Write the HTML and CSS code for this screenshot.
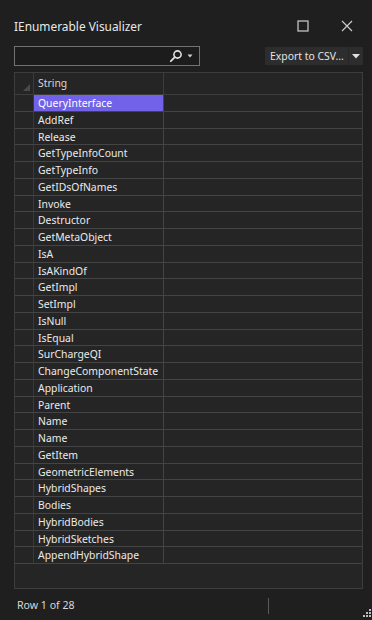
FILE: index.html
```html
<!DOCTYPE html>
<html>
<head>
<meta charset="utf-8">
<link rel="stylesheet" href="styles.css">
</head>
<body>
<div class="window">
  <div class="titlebar">
    <span class="title">IEnumerable Visualizer</span>
    <div class="controls">
      <span class="ctl max"><svg width="12" height="12" viewBox="0 0 12 12"><rect x="1" y="1" width="10" height="10" fill="none" stroke="#d0d0d0" stroke-width="1.2"/></svg></span>
      <span class="ctl close"><svg width="12" height="12" viewBox="0 0 12 12"><path d="M1 1L11 11M11 1L1 11" stroke="#d0d0d0" stroke-width="1.1"/></svg></span>
    </div>
  </div>
  <div class="toolbar">
    <div class="search">
      <svg class="mag" width="14" height="14" viewBox="0 0 14 14"><circle cx="8.5" cy="5.5" r="3.6" fill="none" stroke="#e0e0e0" stroke-width="1.6"/><path d="M5.8 8.2L1.8 12.2" stroke="#e0e0e0" stroke-width="1.8" stroke-linecap="round"/></svg>
      <svg class="caret" width="6" height="4" viewBox="0 0 6 4"><path d="M0.5 0.5H5.5L3 3.5Z" fill="#cfcfcf"/></svg>
    </div>
    <div class="export">
      <span class="export-label">Export to CSV...</span>
      <span class="export-drop"><svg width="8" height="5" viewBox="0 0 8 5"><path d="M0 0H8L4 4.5Z" fill="#e0e0e0"/></svg></span>
    </div>
  </div>
  <div class="grid">
    <div class="row head">
      <div class="rh"><span class="corner"></span></div>
      <div class="c1">String</div>
      <div class="c2"></div>
    </div>
    <div class="row sel"><div class="rh"></div><div class="c1">QueryInterface</div><div class="c2"></div></div>
    <div class="row"><div class="rh"></div><div class="c1">AddRef</div><div class="c2"></div></div>
    <div class="row"><div class="rh"></div><div class="c1">Release</div><div class="c2"></div></div>
    <div class="row"><div class="rh"></div><div class="c1">GetTypeInfoCount</div><div class="c2"></div></div>
    <div class="row"><div class="rh"></div><div class="c1">GetTypeInfo</div><div class="c2"></div></div>
    <div class="row"><div class="rh"></div><div class="c1">GetIDsOfNames</div><div class="c2"></div></div>
    <div class="row"><div class="rh"></div><div class="c1">Invoke</div><div class="c2"></div></div>
    <div class="row"><div class="rh"></div><div class="c1">Destructor</div><div class="c2"></div></div>
    <div class="row"><div class="rh"></div><div class="c1">GetMetaObject</div><div class="c2"></div></div>
    <div class="row"><div class="rh"></div><div class="c1">IsA</div><div class="c2"></div></div>
    <div class="row"><div class="rh"></div><div class="c1">IsAKindOf</div><div class="c2"></div></div>
    <div class="row"><div class="rh"></div><div class="c1">GetImpl</div><div class="c2"></div></div>
    <div class="row"><div class="rh"></div><div class="c1">SetImpl</div><div class="c2"></div></div>
    <div class="row"><div class="rh"></div><div class="c1">IsNull</div><div class="c2"></div></div>
    <div class="row"><div class="rh"></div><div class="c1">IsEqual</div><div class="c2"></div></div>
    <div class="row"><div class="rh"></div><div class="c1">SurChargeQI</div><div class="c2"></div></div>
    <div class="row"><div class="rh"></div><div class="c1">ChangeComponentState</div><div class="c2"></div></div>
    <div class="row"><div class="rh"></div><div class="c1">Application</div><div class="c2"></div></div>
    <div class="row"><div class="rh"></div><div class="c1">Parent</div><div class="c2"></div></div>
    <div class="row"><div class="rh"></div><div class="c1">Name</div><div class="c2"></div></div>
    <div class="row"><div class="rh"></div><div class="c1">Name</div><div class="c2"></div></div>
    <div class="row"><div class="rh"></div><div class="c1">GetItem</div><div class="c2"></div></div>
    <div class="row"><div class="rh"></div><div class="c1">GeometricElements</div><div class="c2"></div></div>
    <div class="row"><div class="rh"></div><div class="c1">HybridShapes</div><div class="c2"></div></div>
    <div class="row"><div class="rh"></div><div class="c1">Bodies</div><div class="c2"></div></div>
    <div class="row"><div class="rh"></div><div class="c1">HybridBodies</div><div class="c2"></div></div>
    <div class="row"><div class="rh"></div><div class="c1">HybridSketches</div><div class="c2"></div></div>
    <div class="row"><div class="rh"></div><div class="c1">AppendHybridShape</div><div class="c2"></div></div>
  </div>
  <div class="status">
    <span class="status-text">Row 1 of 28</span>
    <span class="status-sep"></span>
    <svg class="grip" width="10" height="10" viewBox="0 0 10 10" fill="#bdbdbd"><rect x="8" y="0" width="2" height="2"/><rect x="5" y="3" width="2" height="2"/><rect x="8" y="3" width="2" height="2"/><rect x="2" y="6" width="2" height="2"/><rect x="5" y="6" width="2" height="2"/><rect x="8" y="6" width="2" height="2"/></svg>
  </div>
</div>
</body>
</html>
```
FILE: styles.css
```css
html, body {
  margin: 0;
  padding: 0;
  background: #1f1f1f;
}
.window {
  width: 372px;
  height: 620px;
  display: flex;
  flex-direction: column;
  font-family: "Noto Sans", "Open Sans", sans-serif;
  color: #e6e6e6;
  position: relative;
  box-sizing: border-box;
}
.titlebar {
  height: 46px;
  display: flex;
  align-items: flex-start;
  justify-content: space-between;
  padding: 17px 0 0 14px;
  box-sizing: border-box;
}
.title {
  font-size: 11.9px;
  color: #e8e8e8;
  line-height: 18px;
}
.controls {
  display: flex;
  padding-top: 3px;
}
.ctl {
  width: 44px;
  height: 12px;
  display: flex;
  justify-content: center;
}
.ctl.close { margin-right: 3px; }
.toolbar {
  height: 26px;
  display: flex;
  justify-content: space-between;
  padding: 0 9px 0 14px;
}
.search {
  width: 186px;
  height: 20px;
  box-sizing: border-box;
  border: 1px solid #727272;
  background: #1c1c1c;
  display: flex;
  align-items: center;
  justify-content: flex-end;
  padding-right: 6px;
  gap: 4px;
}
.export {
  width: 98px;
  height: 18px;
  margin-top: 1px;
  background: #2d2d2d;
  display: flex;
  align-items: center;
  font-size: 10.4px;
  color: #e4e4e4;
}
.export-label {
  flex: 1;
  padding-left: 5px;
  white-space: nowrap;
  border-right: 1px solid #262626;
  line-height: 18px;
}
.export-drop {
  width: 14px;
  display: flex;
  justify-content: center;
}
.grid {
  margin: 0 9px 0 14px;
  height: 517px;
  box-sizing: border-box;
  border: 1px solid #3d3d3d;
  background: #252525;
  font-size: 10.4px;
}
.row {
  display: flex;
  height: 16.75px;
  box-sizing: border-box;
  border-bottom: 1px solid #444;
}
.row.head {
  height: 22px;
  border-bottom: 1px solid #3d3d3d;
}
.rh {
  width: 18px;
  border-right: 1px solid #3a3a3a;
  position: relative;
}
.corner {
  position: absolute;
  right: 3px;
  bottom: 3px;
  width: 0;
  height: 0;
  border-left: 7px solid transparent;
  border-bottom: 7px solid #4a4a4a;
}
.c1 {
  width: 130px;
  border-right: 1px solid #444;
  padding: 1px 0 0 4px;
  line-height: 14.75px;
  color: #ebebeb;
  white-space: nowrap;
  overflow: hidden;
  box-sizing: border-box;
}
.head .c1 {
  line-height: 21px;
  padding-top: 0;
  color: #d8d8d8;
  border-right-color: #3d3d3d;
}
.c2 { flex: 1; }
.sel .c1 {
  background: #7262e9;
  color: #ffffff;
}
.status {
  flex: 1;
  display: flex;
  align-items: center;
  position: relative;
  padding-left: 17px;
  font-size: 10.6px;
  color: #d8d8d8;
}
.status-text {
  width: 251px;
}
.status-sep {
  width: 1px;
  height: 16px;
  background: #5a5a5a;
  margin-top: 2px;
}
.grip {
  position: absolute;
  right: 1px;
  bottom: 1px;
}
```
